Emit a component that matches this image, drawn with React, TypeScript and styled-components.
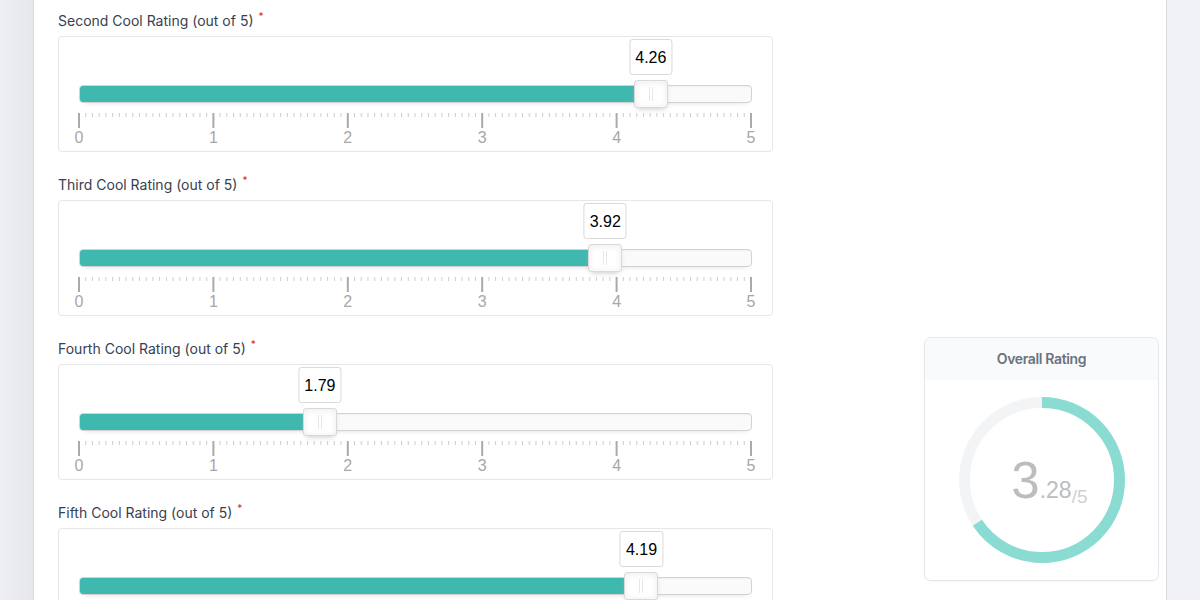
import React from 'react'
import styled, { createGlobalStyle } from 'styled-components'

const GlobalStyle = createGlobalStyle`
  html, body {
    margin: 0;
    padding: 0;
    background: #f1f2f5;
  }
  body {
    font-family: Inter, "Noto Sans", sans-serif;
    background: linear-gradient(to right, #eeeff2 0px, #e6e7ea 33px, #f1f2f5 33px);
  }
`

const Panel = styled.div`
  margin: 0 33px;
  min-height: 100vh;
  background: #fff;
  border-left: 1px solid #d6d9de;
  border-right: 1px solid #d6d9de;
  display: flex;
  justify-content: space-between;
  align-items: flex-start;
  padding: 11px 7px 0 24px;
  box-sizing: border-box;
`

const Form = styled.div`
  width: 715px;
  flex-shrink: 0;
`

const Field = styled.div`
  margin-bottom: 23px;
`

const Label = styled.label`
  display: block;
  font-size: 14px;
  line-height: 20px;
  color: #374151;
  margin-bottom: 5px;
`

const Required = styled.span`
  color: #dc2626;
  font-size: 10px;
  vertical-align: top;
  line-height: 11px;
  margin-left: 5px;
`

const SliderBox = styled.div`
  height: 116px;
  border: 1px solid #e5e7eb;
  border-radius: 4px;
  box-sizing: border-box;
  padding: 48px 20px 0;
`

const Track = styled.div`
  position: relative;
  height: 18px;
  background: #fafafa;
  border: 1px solid #d3d3d3;
  border-radius: 4px;
  box-sizing: border-box;
  box-shadow: inset 0 1px 1px #f0f0f0, 0 3px 6px -5px #bbb;
`

const Connect = styled.div`
  position: absolute;
  left: 0;
  top: 0;
  bottom: 0;
  background: #3fb8af;
  border-radius: 3px 0 0 3px;
`

const HandleArea = styled.div`
  position: absolute;
  left: 0;
  right: 1px;
  top: 0;
  bottom: 0;
`

const Handle = styled.div`
  position: absolute;
  top: -6px;
  width: 34px;
  height: 28px;
  margin-left: -17px;
  box-sizing: border-box;
  background: #fff;
  border: 1px solid #d9d9d9;
  border-radius: 3px;
  box-shadow: inset 0 0 1px #fff, inset 0 1px 7px #ebebeb, 0 3px 6px -3px #bbb;

  &::before,
  &::after {
    content: '';
    position: absolute;
    top: 6px;
    height: 14px;
    width: 1px;
    background: #e8e7e6;
  }
  &::before {
    left: 14px;
  }
  &::after {
    left: 17px;
  }
`

const Tip = styled.div`
  position: absolute;
  bottom: 32px;
  left: 50%;
  transform: translateX(-50%);
  background: #fff;
  border: 1px solid #d9d9d9;
  border-radius: 3px;
  padding: 7px 5px 6px;
  font-family: "Liberation Sans", Arial, sans-serif;
  font-size: 16px;
  line-height: 21px;
  color: #000;
  white-space: nowrap;
`

const Scale = styled.div`
  position: relative;
  margin: 8px 1px 0 0;
  height: 36px;
`

const Ticks = styled.svg`
  display: block;
  width: 100%;
  height: 16px;
  overflow: visible;
`

const TickLabel = styled.span`
  position: absolute;
  top: 17px;
  transform: translateX(-50%);
  font-family: "Liberation Sans", Arial, sans-serif;
  font-size: 16px;
  line-height: 20px;
  color: #a8a8a8;
`

const Side = styled.div`
  width: 235px;
  flex-shrink: 0;
  padding-top: 326px;
`

const Card = styled.div`
  border: 1px solid #e5e7eb;
  border-radius: 7px;
  overflow: hidden;
  box-shadow: 0 1px 2px rgba(0, 0, 0, 0.04);
  background: #fff;
`

const CardHeader = styled.div`
  height: 40px;
  padding-bottom: 2px;
  background: #f9fafb;
  display: flex;
  align-items: center;
  justify-content: center;
  font-size: 14px;
  font-weight: 600;
  letter-spacing: -0.35px;
  color: #6b7280;
`

const CardBody = styled.div`
  height: 200px;
  display: flex;
  align-items: center;
  justify-content: center;
`

const Gauge = styled.div`
  position: relative;
  width: 166px;
  height: 166px;
`

const GaugeSvg = styled.svg`
  display: block;
`

const Score = styled.div`
  position: absolute;
  inset: 0;
  display: flex;
  align-items: center;
  justify-content: center;
  font-family: "Liberation Sans", Arial, sans-serif;
  color: #bdbdbd;
`

const ScoreValue = styled.div`
  position: relative;
  display: flex;
  align-items: baseline;
`

const Whole = styled.span`
  font-size: 51px;
  line-height: 1;
`

const Fraction = styled.span`
  font-size: 23px;
`

const OutOf = styled.span`
  position: absolute;
  left: 100%;
  bottom: -2px;
  font-size: 19px;
  color: #d1d1d1;
  white-space: nowrap;
`

const ratings = [
  { label: 'Second Cool Rating (out of 5)', value: 4.26 },
  { label: 'Third Cool Rating (out of 5)', value: 3.92 },
  { label: 'Fourth Cool Rating (out of 5)', value: 1.79 },
  { label: 'Fifth Cool Rating (out of 5)', value: 4.19 },
]

const MAX = 5

function Slider({ value }: { value: number }) {
  const pct = (value / MAX) * 100
  const ticks = Array.from({ length: 101 }, (_, i) => i)

  return (
    <SliderBox>
      <Track>
        <Connect style={{ width: `${pct}%` }} />
        <HandleArea>
          <Handle style={{ left: `${pct}%` }}>
            <Tip>{value.toFixed(2)}</Tip>
          </Handle>
        </HandleArea>
      </Track>
      <Scale>
        <Ticks>
          {ticks.map(i => {
            const major = i % 20 === 0
            return (
              <line
                key={i}
                x1={`${i}%`}
                x2={`${i}%`}
                y1={2}
                y2={major ? 17 : 6}
                stroke={major ? '#aaa' : '#ccc'}
                strokeWidth={major ? 2 : 1}
              />
            )
          })}
        </Ticks>
        {[0, 1, 2, 3, 4, 5].map(n => (
          <TickLabel key={n} style={{ left: `${(n / MAX) * 100}%` }}>
            {n}
          </TickLabel>
        ))}
      </Scale>
    </SliderBox>
  )
}

function OverallRating({ value }: { value: number }) {
  const r = 77.5
  const c = 2 * Math.PI * r
  const filled = (value / MAX) * c
  const [whole, frac] = value.toFixed(2).split('.')

  return (
    <Card>
      <CardHeader>Overall Rating</CardHeader>
      <CardBody>
        <Gauge>
          <GaugeSvg width="166" height="166" viewBox="0 0 166 166">
            <circle cx="83" cy="83" r={r} fill="none" stroke="#f3f4f6" strokeWidth="11" />
            <circle
              cx="83"
              cy="83"
              r={r}
              fill="none"
              stroke="#8adcd2"
              strokeWidth="11"
              strokeDasharray={`${filled} ${c}`}
              transform="rotate(-90 83 83)"
            />
          </GaugeSvg>
          <Score>
            <ScoreValue>
              <Whole>{whole}</Whole>
              <Fraction>.{frac}</Fraction>
              <OutOf>/{MAX}</OutOf>
            </ScoreValue>
          </Score>
        </Gauge>
      </CardBody>
    </Card>
  )
}

export default function App() {
  const avg = 3.28

  return (
    <>
      <GlobalStyle />
      <Panel>
        <Form>
          {ratings.map(r => (
            <Field key={r.label}>
              <Label>
                {r.label}
                <Required>*</Required>
              </Label>
              <Slider value={r.value} />
            </Field>
          ))}
        </Form>
        <Side>
          <OverallRating value={avg} />
        </Side>
      </Panel>
    </>
  )
}
